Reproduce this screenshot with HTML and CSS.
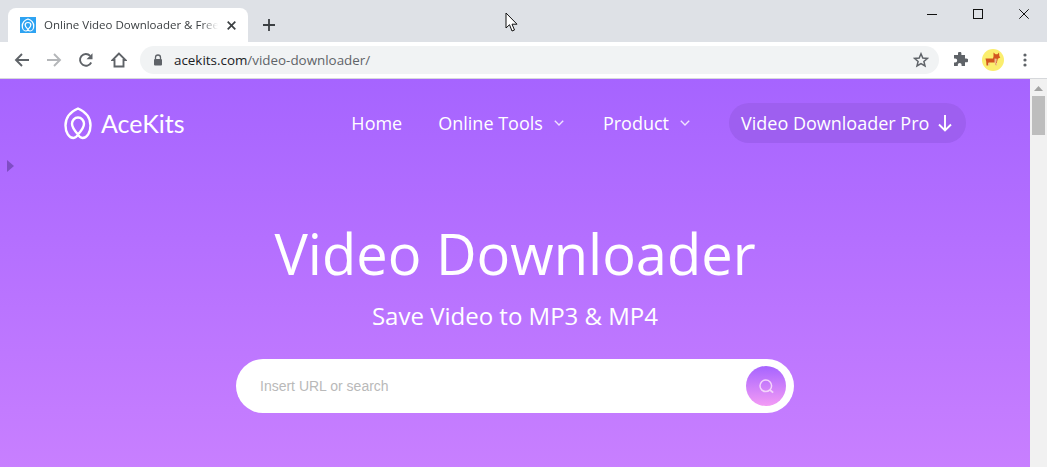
FILE: index.html
```html
<!DOCTYPE html>
<html lang="en">
<head>
<meta charset="utf-8">
<title>Online Video Downloader</title>
<link rel="stylesheet" href="styles.css">
</head>
<body>
<div class="tabstrip">
  <div class="tab">
    <span class="favicon"><svg width="16" height="16" viewBox="0 0 28 33" preserveAspectRatio="none"><rect width="28" height="33" fill="#2ea3f2"/><path d="M14 4C8 6.500 4 11.500 4 18.500c0 5.800 2.700 10.500 6.200 10.500 1.700 0 2.900-1.200 3.800-2.900.9 1.700 2.100 2.900 3.800 2.900 3.500 0 6.200-4.700 6.200-10.500C24 11.500 20 6.500 14 4zM14 25.500c-2.500-2.800-5-6-5-9 0-2.900 2.200-5.200 5-5.200s5 2.300 5 5.200c0 3-2.500 6.200-5 9z" fill="none" stroke="#fff" stroke-width="2.200"/></svg></span>
    <span class="tab-title">Online Video Downloader &amp; Free</span>
    <svg class="tab-close" width="9" height="9" viewBox="0 0 9 9"><path d="M.7.700l7.600 7.600M8.300.700L.7 8.300" stroke="#3c4043" stroke-width="1.700"/></svg>
  </div>
  <svg class="new-tab" width="12" height="12" viewBox="0 0 12 12"><path d="M6 0v12M0 6h12" stroke="#3c4043" stroke-width="1.800"/></svg>
  <div class="window-controls">
    <svg width="10" height="10" viewBox="0 0 10 10"><path d="M0 5.500h10" stroke="#111" stroke-width="1"/></svg>
    <svg width="10" height="10" viewBox="0 0 10 10"><rect x=".5" y=".5" width="9" height="9" fill="none" stroke="#111"/></svg>
    <svg width="10" height="10" viewBox="0 0 10 10"><path d="M.3.300l9.400 9.400M9.700.300L.3 9.700" stroke="#111" stroke-width="1"/></svg>
  </div>
</div>
<div class="toolbar">
  <div class="nav-icons">
    <svg width="16" height="16" viewBox="0 0 16 16"><path d="M15 8H2M8 2L2 8l6 6" fill="none" stroke="#5f6368" stroke-width="1.900"/></svg>
    <svg width="16" height="16" viewBox="0 0 16 16"><path d="M1 8h13M8 2l6 6-6 6" fill="none" stroke="#b4b6b9" stroke-width="1.900"/></svg>
    <svg width="16" height="16" viewBox="0 0 16 16"><path d="M13.200 10.500A5.900 5.900 0 1 1 12.200 3.800" fill="none" stroke="#5f6368" stroke-width="1.900"/><path d="M14.500 1.200v6h-6z" fill="#5f6368"/></svg>
    <svg class="home" width="16" height="16" viewBox="0 0 16 16"><path d="M8 1.500L1.500 8H3.500v6.500h9V8h2z" fill="none" stroke="#5f6368" stroke-width="1.900" stroke-linejoin="miter"/></svg>
  </div>
  <div class="omnibox">
    <svg class="lock" width="10" height="12" viewBox="0 0 10 12"><path d="M2.500 5V3.500a2.500 2.500 0 0 1 5 0V5" fill="none" stroke="#5f6368" stroke-width="1.300"/><rect x="1" y="5" width="8" height="6.500" rx="1" fill="#5f6368"/></svg>
    <span class="url"><span class="host">acekits.com</span>/video-downloader/</span>
    <svg class="star" width="16" height="16" viewBox="0 0 16 16"><path d="M8 1.800l1.800 4.200 4.600.4-3.500 3 1.100 4.500L8 11.500l-4 2.400 1.100-4.500-3.500-3 4.600-.4z" fill="none" stroke="#5f6368" stroke-width="1.500"/></svg>
  </div>
  <div class="ext-icons">
    <svg width="16" height="16" viewBox="0 0 16 16"><path d="M6 1.500a1.700 1.700 0 0 1 3.400 0V3H13v3.500h1.300a1.900 1.900 0 0 1 0 3.800H13V14H9.600v-1.200a1.900 1.900 0 0 0-3.800 0V14H2v-3.600h1.200a2 2 0 0 0 0-4H2V3h4z" fill="#5f6368"/></svg>
    <span class="avatar"><svg width="22" height="22" viewBox="0 0 22 22"><circle cx="11" cy="11" r="11" fill="#fbee6e"/><path d="M3.500 9.500H11l.5-2L11.500 3.500l2 1.800h2l1.500-1.800.3 3.500 1 1.500-2.500 1.300-.8 3.200v3H13.500v-2.500h-7l-.5 3H4.500l-.3-4z" fill="#d2561f"/><path d="M12.500 9.500l2.300.3-.5 4.200h-1.800zM6 14h1.500v2.500H6zM13.500 14h1.500v2.500h-1.500z" fill="#eec08c"/></svg></span>
    <svg width="4" height="14" viewBox="0 0 4 14"><circle cx="2" cy="2" r="1.600" fill="#5f6368"/><circle cx="2" cy="7" r="1.600" fill="#5f6368"/><circle cx="2" cy="12" r="1.600" fill="#5f6368"/></svg>
  </div>
</div>
<div class="viewport">
  <main class="page">
    <span class="side-toggle"></span>
    <header class="site-header">
      <a class="brand">
        <svg width="28" height="33" viewBox="0 0 28 33"><path d="M14 1.500C7 4.500 1.500 10 1.500 18.500c0 7 3.500 12.500 8 12.500 2 0 3.400-1.500 4.500-3.500 1.100 2 2.500 3.500 4.500 3.500 4.500 0 8-5.500 8-12.500C26.500 10 21 4.500 14 1.500zM14 27.500c-3-3.300-6-7.300-6-10.700 0-3.500 2.700-6.300 6-6.300s6 2.800 6 6.300c0 3.400-3 7.400-6 10.700z" fill="none" stroke="#fff" stroke-width="2.400" stroke-linejoin="round"/></svg>
        <span class="brand-name">AceKits</span>
      </a>
      <nav class="site-nav">
        <a class="nav-link">Home</a>
        <a class="nav-link has-menu">Online Tools <svg class="chev" width="10" height="6" viewBox="0 0 10 6"><path d="M.8.800L5 5l4.200-4.200" fill="none" stroke="#f0e2ff" stroke-width="1.400"/></svg></a>
        <a class="nav-link has-menu">Product <svg class="chev" width="10" height="6" viewBox="0 0 10 6"><path d="M.8.800L5 5l4.200-4.200" fill="none" stroke="#f0e2ff" stroke-width="1.400"/></svg></a>
        <a class="nav-pill">Video Downloader Pro <svg width="14" height="17" viewBox="0 0 14 17"><path d="M7 0v15.500M1 9.500l6 6 6-6" fill="none" stroke="#fff" stroke-width="1.900"/></svg></a>
      </nav>
    </header>
    <section class="hero">
      <h1>Video Downloader</h1>
      <p class="subtitle">Save Video to MP3 &amp; MP4</p>
      <form class="search">
        <span class="placeholder">Insert URL or search</span>
        <span class="search-btn"><svg width="17" height="17" viewBox="0 0 17 17"><circle cx="7.800" cy="7.800" r="5.800" fill="none" stroke="#f4d4fb" stroke-width="1.500"/><path d="M12 12l3.200 2.600" stroke="#f4d4fb" stroke-width="1.800"/></svg></span>
      </form>
    </section>
  </main>
  <div class="scrollbar">
    <svg class="scroll-up" width="9" height="5" viewBox="0 0 9 5"><path d="M4.500 0L9 5H0z" fill="#a3a3a3"/></svg>
    <span class="thumb"></span>
  </div>
</div>
<svg class="cursor" width="14" height="21" viewBox="0 0 14 21"><path d="M1 1v15l3.500-3.300L7 19l2.500-1-2.500-5.800h5z" fill="#fff" stroke="#111" stroke-width="1"/></svg>
</body>
</html>
```
FILE: styles.css
```css
* { box-sizing: border-box; }
html, body { margin: 0; height: 467px; overflow: hidden; }
body { font-family: "Open Sans", "Noto Sans", sans-serif; background: #fff; }
svg { display: block; flex: none; }

.tabstrip { display: flex; align-items: flex-end; height: 42px; background: #dee1e6; padding-left: 8px; }
.tab { display: flex; align-items: center; width: 240px; height: 34px; padding: 0 12px 0 12px; background: #fff; border-radius: 8px 8px 0 0; }
.favicon { flex: none; width: 16px; height: 16px; margin-right: 8px; }
.tab-title { flex: 1; overflow: hidden; white-space: nowrap; font-size: 11.5px; line-height: 16px; color: #3c4043; -webkit-mask-image: linear-gradient(90deg, #000 90%, transparent); mask-image: linear-gradient(90deg, #000 90%, transparent); }
.tab-close { margin-left: 9px; }
.new-tab { margin: 0 0 11px 15px; }
.window-controls { display: flex; gap: 36px; margin: 0 18px 0 auto; align-self: flex-start; padding-top: 9px; }

.toolbar { display: flex; align-items: center; height: 37px; padding: 0 14px 1px 14px; background: #fff; border-bottom: 1px solid #d6d8db; }
.nav-icons { display: flex; align-items: center; gap: 16px; }
.home { margin-left: 1px; }
.omnibox { display: flex; align-items: center; width: 799px; height: 28px; margin-left: 13px; padding: 0 10px 0 13px; background: #f1f3f4; border-radius: 14px; }
.lock { margin-right: 11px; }
.url { flex: 1; font-size: 13.4px; line-height: 18px; color: #5f6368; white-space: nowrap; }
.host { color: #202124; }
.ext-icons { display: flex; align-items: center; margin-left: 13px; }
.avatar { display: block; width: 22px; height: 22px; margin: 0 19px 0 14px; }

.viewport { display: flex; height: 388px; overflow: hidden; }
.page { position: relative; flex: 1; background: linear-gradient(180deg, #a664ff 0%, #c87fff 100%); color: #fff; }
.side-toggle { position: absolute; left: 7px; top: 81px; border-left: 7px solid #7f4dc4; border-top: 6.5px solid transparent; border-bottom: 6.5px solid transparent; }

.site-header { display: flex; align-items: center; justify-content: space-between; height: 64px; margin-top: 12px; padding: 0 64px; }
.brand { display: flex; align-items: center; gap: 9px; }
.brand-name { font-family: Lato, sans-serif; font-size: 25px; line-height: 32px; color: #fff; }
.site-nav { display: flex; align-items: center; gap: 36px; }
.nav-link { display: flex; align-items: center; gap: 11px; font-size: 18px; line-height: 24px; white-space: nowrap; }
.has-menu { margin-right: 3px; }
.nav-pill { display: flex; align-items: center; gap: 9px; width: 237px; height: 40px; padding: 0 12px; background: #9e5ff0; border-radius: 20px; font-size: 18px; white-space: nowrap; }

.hero { display: flex; flex-direction: column; align-items: center; padding-top: 60px; }
.hero h1 { margin: 0; font-size: 56px; font-weight: 400; line-height: 76px; }
.subtitle { margin: 9px 0 0; font-size: 24px; line-height: 32px; }
.search { display: flex; align-items: center; justify-content: space-between; width: 558px; height: 54px; margin-top: 27px; padding: 0 8px 0 24px; background: #fff; border-radius: 27px; }
.placeholder { font-family: "Liberation Sans", Arial, sans-serif; font-size: 14px; color: #b9b9b9; }
.search-btn { display: flex; align-items: center; justify-content: center; width: 40px; height: 40px; border-radius: 50%; background: linear-gradient(180deg, #a664ff, #f39bf5); }

.scrollbar { position: relative; flex: none; width: 17px; background: #f1f1f1; }
.scroll-up { position: absolute; left: 4px; top: 7px; }
.thumb { position: absolute; left: 2px; top: 17px; width: 13px; height: 39px; background: #bdbdbd; }

.cursor { position: absolute; left: 505px; top: 12px; }
```
